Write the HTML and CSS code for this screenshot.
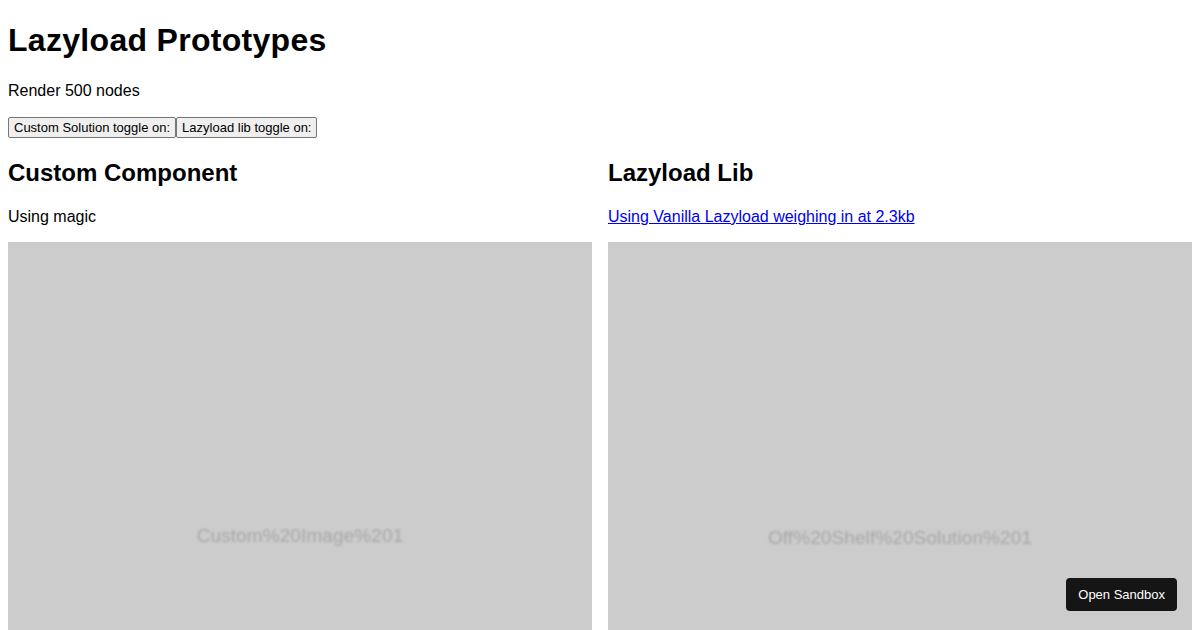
FILE: index.html
```html
<!DOCTYPE html>
<html lang="en">

<head>
    <meta charset="UTF-8">
    <meta name="viewport" content="width=device-width, initial-scale=1.0">
    <title>Lazyload Prototypes</title>
    <link rel="stylesheet" href="styles.css">
</head>

<body>
    <h1>Lazyload Prototypes</h1>
    <p class="intro">Render 500 nodes</p>
    <div class="toggles"><button type="button">Custom Solution toggle on:</button><button type="button">Lazyload lib toggle on:</button></div>

    <div class="columns">
        <div class="column">
            <h2>Custom Component</h2>
            <p>Using magic</p>
            <div class="placeholder"><span>Custom%20Image%201</span></div>
        </div>
        <div class="column">
            <h2>Lazyload Lib</h2>
            <p><a href="#">Using Vanilla Lazyload weighing in at 2.3kb</a></p>
            <div class="placeholder lib"><span>Off%20Shelf%20Solution%201</span></div>
        </div>
    </div>

    <a class="sandbox" href="#">Open Sandbox</a>
</body>

</html>
```

FILE: styles.css
```css
html {
    overflow: hidden;
}

body {
    font-family: "Liberation Sans", Arial, sans-serif;
    margin: 0;
    padding: 0 8px;
    color: #000000;
}

h1 {
    font-size: 32px;
    letter-spacing: 0.3px;
    margin: 22px 0 23px;
}

h2 {
    font-size: 24px;
    margin: 21px 0;
}

p {
    margin: 16px 0;
}

.intro {
    margin: 0 0 17px;
}

a {
    color: #0000ee;
}

.toggles {
    display: flex;
}

.toggles button {
    font-family: "Liberation Sans", Arial, sans-serif;
    font-size: 13px;
    padding: 2px 5px;
    background-color: #efefef;
    border: 1px solid #767676;
    border-radius: 2px;
    color: #000000;
}

.columns {
    display: grid;
    grid-template-columns: 1fr 1fr;
    gap: 16px;
}

.placeholder {
    margin-top: 16px;
    height: 584px;
    padding-top: 4px;
    box-sizing: border-box;
    background-color: #cccccc;
    display: flex;
    align-items: center;
    justify-content: center;
}

.placeholder span {
    font-family: "Liberation Sans", Arial, sans-serif;
    font-size: 19px;
    letter-spacing: 0.1px;
    color: #a8a8a8;
    filter: blur(0.8px);
}

.placeholder.lib span {
    margin-top: 4px;
}

.sandbox {
    position: fixed;
    right: 23px;
    bottom: 19px;
    background-color: #151515;
    color: #ffffff;
    font-size: 13px;
    text-decoration: none;
    padding: 9px 12px;
    border-radius: 4px;
}
```
